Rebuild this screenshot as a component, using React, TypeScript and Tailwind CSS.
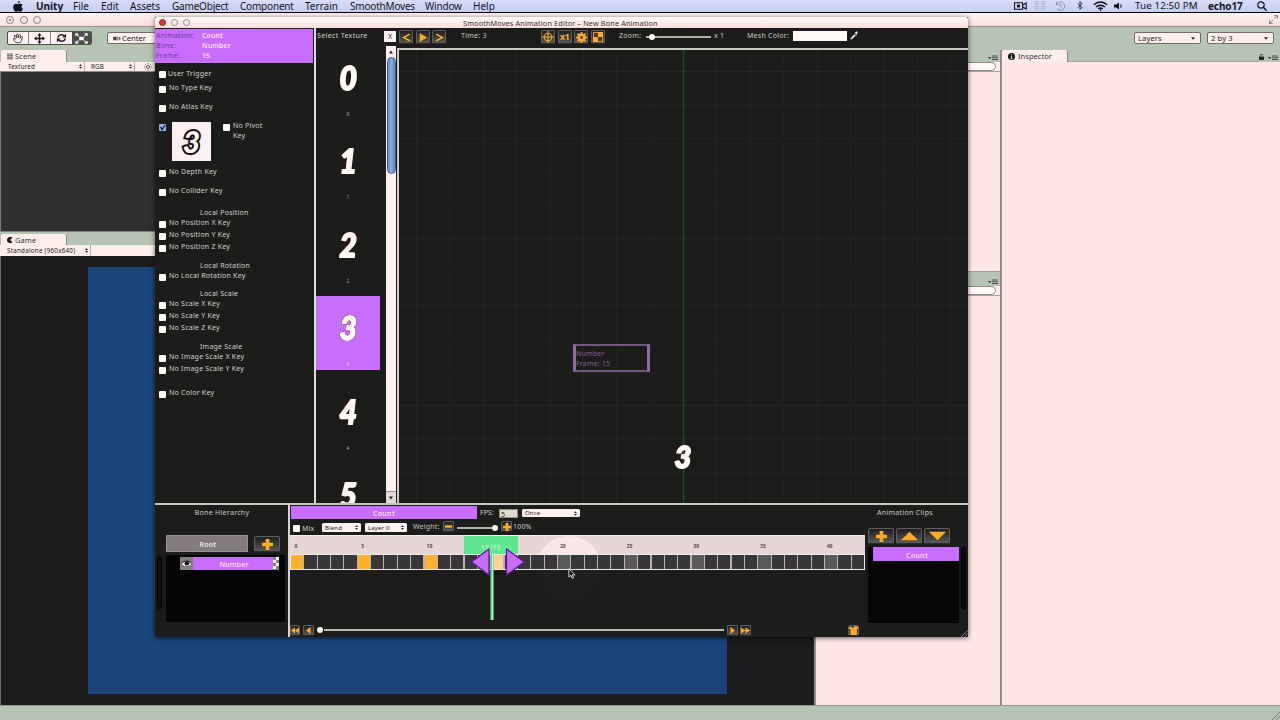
import React from "react";
import clsx from "clsx";

type Kids = { children?: React.ReactNode; className?: string };

function Txt({ children, className }: Kids) {
  return <span className={clsx("block shrink-0 whitespace-pre leading-[10px]", className)}>{children}</span>;
}

function Check({ on }: { on?: boolean }) {
  return (
    <span className={clsx("block h-[7px] w-[7px] shrink-0 rounded-[1px]", on ? "bg-[#8db4ec]" : "bg-[#fffaf4]")}>
      {on && (
        <svg viewBox="0 0 7 7" className="h-[7px] w-[7px]">
          <path d="M1.5 3 L3.2 5.5 L6 1" stroke="#10203c" strokeWidth="1.4" fill="none" />
        </svg>
      )}
    </span>
  );
}

function IconButton({ children, className }: Kids) {
  return (
    <span
      className={clsx(
        "flex shrink-0 items-center justify-center rounded-[2px] border border-[#5f5f5f] border-b-[#2c2c2c] bg-linear-to-b from-[#1f1f1f] to-[#5a5a5a]",
        className,
      )}
    >
      {children}
    </span>
  );
}

function Glyph({ d, className, stroke }: { d: string; className: string; stroke?: number }) {
  return (
    <svg viewBox="0 0 12 12" className={className} preserveAspectRatio="none">
      <path
        d={d}
        fill={stroke ? "none" : "#ffab26"}
        fillRule="evenodd"
        stroke={stroke ? "#ffab26" : "none"}
        strokeWidth={stroke ?? 0}
      />
    </svg>
  );
}

const PLUS = "M4 0H8V4H12V8H8V12H4V8H0V4H4Z";

function UpDown() {
  return (
    <svg viewBox="0 0 4 6" className="h-[5px] w-[3px]">
      <path d="M0 2.4 L2 0 L4 2.4 Z M0 3.6 L2 6 L4 3.6 Z" fill="#222" />
    </svg>
  );
}

function Caret({ className }: { className?: string }) {
  return (
    <svg viewBox="0 0 5 3" className={clsx("h-[3px] w-[4px]", className)}>
      <path d="M0 0H5L2.5 3Z" fill="#222" />
    </svg>
  );
}

function PanelMenu() {
  return (
    <svg viewBox="0 0 10 5" className="h-[5px] w-[10px]">
      <path d="M0 2H3.4L1.7 4.2Z" fill="#333" />
      <path d="M4 1H10M4 2.8H10M4 4.5H10" stroke="#444" strokeWidth="0.9" />
    </svg>
  );
}

function MenuBar() {
  const items = [
    ["Unity", "w-[37px] font-bold"],
    ["File", "w-[28px]"],
    ["Edit", "w-[29px]"],
    ["Assets", "w-[42px]"],
    ["GameObject", "w-[68px] tracking-[-0.2px]"],
    ["Component", "w-[65px] tracking-[-0.2px]"],
    ["Terrain", "w-[45px]"],
    ["SmoothMoves", "w-[75px] tracking-[-0.2px]"],
    ["Window", "w-[48px] tracking-[-0.2px]"],
    ["Help", "w-[28px]"],
  ];
  return (
    <header className="flex h-[13px] shrink-0 items-center border-b border-black bg-linear-to-b from-[#d9ddfa] to-[#c8cdf0] text-[10px] text-[#14141c]">
      <svg viewBox="0 0 20 22" className="ml-[13px] mr-[13px] h-[11px] w-[10px]">
        <path
          d="M14 0 C14.2 2.6 12 5 9.7 5 C9.5 2.6 11.6 .3 14 0Z M10 6.6 C11.3 6.6 12.6 5.3 15 5.3 C16.6 5.3 18.2 6.2 19.2 7.6 C15.8 9.6 16.4 14.3 19.8 15.7 C18.9 18.3 17 21.6 14.6 21.6 C13 21.6 12.4 20.6 10.4 20.6 C8.4 20.6 7.7 21.6 6.1 21.6 C3.4 21.6 .3 16.5 .3 12 C.3 7.8 2.9 5.3 5.8 5.3 C7.7 5.3 9 6.6 10 6.6Z"
          fill="#101018"
        />
      </svg>
      {items.map(([label, cls]) => (
        <Txt key={label} className={cls}>{label}</Txt>
      ))}
      <div className="flex-1" />
      <svg viewBox="0 0 13 8" className="mb-px h-[8px] w-[13px]">
        <path d="M.5 .8H8.6V7.2H.5Z M8.8 3L12.2 1V7L8.8 5" fill="none" stroke="#15151c" strokeWidth="1.1" />
        <path d="M3 2.6H6V5.4H3Z" fill="#15151c" />
      </svg>
      <svg viewBox="0 0 10 9" className="mb-px ml-[8px] h-[9px] w-[10px]">
        <path d="M0 1H4M0 3.3H4M0 5.6H4M0 8H4M6 1H10M6 3.3H10M6 5.6H10M6 8H10" stroke="#a9adc9" strokeWidth="1" />
      </svg>
      <svg viewBox="0 0 12 10" className="mb-px ml-[9px] h-[10px] w-[12px]">
        <path d="M2.5 3.2A4.3 4.3 0 1 1 3 7.8M2.4 .8V3.6H5M6.4 2.6V5.2L8.4 6.2" fill="none" stroke="#8a8ea8" strokeWidth="1" />
      </svg>
      <svg viewBox="0 0 6 10" className="mb-px ml-[11px] h-[9px] w-[6px]">
        <path d="M.6 2.6L5.2 7.2L3 9.4V.6L5.2 2.8L.6 7.4" fill="none" stroke="#20202c" strokeWidth="1" />
      </svg>
      <svg viewBox="0 0 16 11" className="mb-px ml-[10px] h-[10px] w-[15px]">
        <path d="M.8 4.2A10 10 0 0 1 15.2 4.2M3.2 6.6A6.8 6.8 0 0 1 12.8 6.6M5.6 8.8A3.4 3.4 0 0 1 10.4 8.8" fill="none" stroke="#0e0e16" strokeWidth="1.6" />
        <circle cx="8" cy="10" r="1" fill="#0e0e16" />
      </svg>
      <svg viewBox="0 0 9 8" className="mb-px ml-[6px] h-[8px] w-[9px]">
        <path d="M0 2.6H2.2L5 .4V7.6L2.2 5.4H0Z" fill="#101018" />
        <path d="M6.6 2.4A2.4 2.4 0 0 1 6.6 5.6" fill="none" stroke="#101018" />
      </svg>
      <Txt className="ml-[12px] w-[73px] text-[9.8px] tracking-[0.1px]">Tue 12:50 PM</Txt>
      <Txt className="w-[49px] text-[10px] font-bold tracking-[-0.1px]">echo17</Txt>
      <svg viewBox="0 0 10 10" className="mb-px mr-[13px] h-[10px] w-[10px]">
        <circle cx="4" cy="4" r="3.2" fill="none" stroke="#15151c" strokeWidth="1.2" />
        <path d="M6.3 6.3L9.6 9.6" stroke="#15151c" strokeWidth="1.5" />
      </svg>
    </header>
  );
}

function UnityTop() {
  return (
    <>
      <div className="flex h-[14px] shrink-0 items-center gap-[5.5px] border-b border-[#9d9492] bg-linear-to-b from-[#fdf3f1] to-[#f9dfdd] pl-[6px]">
        {[0, 1, 2].map((i) => (
          <span key={i} className="flex h-[8px] w-[8px] items-center justify-center rounded-full border border-[#8f8787] bg-[#f3e8e6]">
            {i === 0 && <span className="h-[2px] w-[2px] rounded-full bg-[#777]" />}
          </span>
        ))}
        <div className="flex-1" />
        <svg viewBox="0 0 10 10" className="mr-[2px] h-[9px] w-[9px]">
          <path d="M5.6 4.4L9.4 .6M6 .6H9.4V4M4.4 5.6L.6 9.4M.6 6V9.4H4" fill="none" stroke="#777" />
        </svg>
      </div>
      <div className="flex h-[23px] shrink-0 items-center bg-[#b8c4b3] pb-px">
        <div className="ml-[7px] flex h-[14px] w-[85px] overflow-hidden rounded-[2px] border border-[#4d504b] bg-[#fdf2f1]">
          <div className="flex w-[21px] items-center justify-center border-r border-[#8b8585]">
            <svg viewBox="0 0 24 24" className="h-[11px] w-[12px]">
              <path d="M7 21C5 18 2.5 15 1.8 12.5C2.5 11 4.5 12 6 14L4 6C4.5 4 6.5 4.5 7 6L9 11L9 3.5C9.5 1.5 11.8 1.8 12 3.5L12.6 10.6L14.6 4C15.6 2.4 17.6 3.2 17.3 5L16.6 11.4L19.6 7.6C21.2 6.8 22.4 8 21.6 9.8C20 13 19.4 18 17 21Z" fill="#fffafa" stroke="#333" strokeWidth="1.8" />
            </svg>
          </div>
          <div className="flex w-[22px] items-center justify-center border-r border-[#8b8585]">
            <svg viewBox="0 0 12 12" className="h-[11px] w-[11px]">
              <path d="M6 1V11M1 6H11" stroke="#151515" strokeWidth="1.5" />
              <path d="M6 0L8.2 2.8H3.8ZM6 12L8.2 9.2H3.8ZM0 6L2.8 3.8V8.2ZM12 6L9.2 3.8V8.2Z" fill="#151515" />
            </svg>
          </div>
          <div className="flex w-[21px] items-center justify-center">
            <svg viewBox="0 0 12 12" className="h-[10px] w-[11px]">
              <path d="M1.5 5.5C2 2 7 .8 9.4 3.6M10.5 6.5C10 10 5 11.2 2.6 8.4" fill="none" stroke="#151515" strokeWidth="1.7" />
              <path d="M11.5 1V5.5H7ZM.5 11V6.5H5Z" fill="#151515" />
            </svg>
          </div>
          <div className="flex flex-1 items-center justify-center bg-[#4a4d49]">
            <svg viewBox="0 0 14 12" className="h-[11px] w-[13px]">
              <path d="M4.5 4H9.5V8H4.5Z" fill="#fff" />
              <path d="M1 1L4 3.6M13 1L10 3.6M1 11L4 8.4M13 11L10 8.4M.8 3.4V.8H3.6M13.2 3.4V.8H10.4M.8 8.6V11.2H3.6M13.2 8.6V11.2H10.4" stroke="#fff" strokeWidth="1.1" fill="none" />
            </svg>
          </div>
        </div>
        <div className="ml-[15px] flex h-[12px] w-[60px] items-center rounded-[2px] border border-[#6a6d68] bg-[#fdf2f1] pl-[5px]">
          <svg viewBox="0 0 9 6" className="h-[5px] w-[8px]">
            <path d="M0 1H4V5H0ZM5 .5H6V5.5H5ZM7 1.5H8.5V4.5H7Z" fill="#444" />
          </svg>
          <Txt className="ml-px text-[7.6px] text-[#181818]">Center</Txt>
        </div>
        <div className="flex-1" />
        {[
          ["Layers", "w-[67px] mr-[6px]"],
          ["2 by 3", "w-[67px] mr-[6px]"],
        ].map(([l, c]) => (
          <div key={l} className={clsx("flex h-[12px] items-center justify-between rounded-[2px] border border-[#6a6d68] bg-[#fdeeec] px-[3px]", c)}>
            <Txt className="text-[7.5px] tracking-[0.15px] text-[#222]">{l}</Txt>
            <Caret className="mr-[2px]" />
          </div>
        ))}
      </div>
    </>
  );
}

function Scene() {
  return (
    <div className="flex w-[814px] shrink-0 flex-col">
      <div className="flex h-[12px] shrink-0 bg-[#b8c4b3]">
        <div className="ml-px flex w-[66px] items-center rounded-t-[2px] border-r border-[#8a8a86] bg-[#fdeeec] pl-[6px]">
          <svg viewBox="0 0 7 8" className="h-[7px] w-[6px]">
            <path d="M1.2 0V8M3.5 0V8M5.8 0V8M0 2.5H7M0 5.5H7" stroke="#444" strokeWidth="0.8" />
          </svg>
          <Txt className="ml-[2px] text-[7.5px] tracking-[0.1px] text-[#333]">Scene</Txt>
        </div>
      </div>
      <div className="flex h-[10px] shrink-0 items-center border-b border-[#8f8a88] bg-[#fdeeec] text-[6.2px] tracking-[0.2px] text-[#1c1c1c]">
        <Txt className="ml-[8px] w-[71px]">Textured</Txt>
        <UpDown />
        <span className="ml-[2px] mr-[3px] h-full w-px bg-[#b7aeac]" />
        <Txt className="ml-[3px] w-[38px]">RGB</Txt>
        <UpDown />
        <span className="ml-[2px] mr-[9px] h-full w-px bg-[#b7aeac]" />
        <svg viewBox="0 0 10 10" className="h-[8px] w-[8px]">
          <circle cx="5" cy="5" r="1.9" fill="none" stroke="#333" />
          <path d="M5 0V1.6M5 8.4V10M0 5H1.6M8.4 5H10M1.4 1.4L2.6 2.6M7.4 7.4L8.6 8.6M8.6 1.4L7.4 2.6M1.4 8.6L2.6 7.4" stroke="#333" strokeWidth="0.9" />
        </svg>
      </div>
      <div className="h-[159px] shrink-0 border-l border-[#77777b] bg-[#303030]" />
      <div className="flex h-[14px] shrink-0 border-t border-[#7d807a] bg-[#b8c4b3]">
        <div className="ml-px mt-[2px] flex w-[66px] items-center rounded-t-[2px] border-r border-[#8a8a86] bg-[#fdeeec] pl-[6px]">
          <svg viewBox="0 0 6 6" className="h-[6px] w-[6px]">
            <path d="M5.4 1A3 3 0 1 0 5.4 5L3 3Z" fill="#151515" />
          </svg>
          <Txt className="ml-[2px] text-[7.5px] tracking-[0.1px] text-[#333]">Game</Txt>
        </div>
      </div>
      <div className="flex h-[11px] shrink-0 items-center bg-[#fdeeec] text-[6.2px] tracking-[0.2px] text-[#1c1c1c]">
        <Txt className="ml-[7px] w-[78px] tracking-[0.28px]">Standalone (960x640)</Txt>
        <UpDown />
        <span className="ml-[2px] h-full w-px bg-[#b7aeac]" />
      </div>
      <div className="flex-1 border-l border-[#66666b] bg-[#1e1b1f] pl-[87px] pt-[11px]">
        <div className="h-[427px] w-[639px] bg-[#1b4479]" />
      </div>
    </div>
  );
}

function SearchStrip() {
  return (
    <>
      <div className="flex h-[12px] shrink-0 items-center justify-end bg-[#b8c4b3] pr-[2px] pt-[3px]">
        <PanelMenu />
      </div>
      <div className="flex h-[10px] shrink-0 items-center justify-end border-b border-[#a79f9d] bg-[#fdeeec] pr-[4px]">
        <div className="h-[9px] w-[80px] rounded-r-full border border-[#8f8a88] bg-[#fffaf9]" />
      </div>
    </>
  );
}

function MiddleColumn() {
  return (
    <div className="flex w-[188px] shrink-0 flex-col border-x-2 border-[#8f8b8d] bg-[#fee7e5]">
      <SearchStrip />
      <div className="h-[200px] shrink-0 border-b border-[#a39c9b]" />
      <div className="h-[2px] shrink-0 bg-[#b8c4b3]" />
      <SearchStrip />
    </div>
  );
}

function Inspector() {
  return (
    <div className="flex flex-1 flex-col bg-[#fee7e5]">
      <div className="flex h-[12px] shrink-0 items-center bg-[#b8c4b3]">
        <div className="flex h-full w-[66px] items-center rounded-t-[2px] border-r border-[#8a8a86] bg-[#fdeeec] pl-[6px]">
          <svg viewBox="0 0 8 8" className="h-[7px] w-[7px]">
            <circle cx="4" cy="4" r="4" fill="#111" />
            <path d="M4 1.2V2.4M4 3.2V6.6M3 3.5H4M2.8 6.4H5.2" stroke="#fff" strokeWidth="0.9" />
          </svg>
          <Txt className="ml-[3px] text-[7.5px] tracking-[0.05px] text-[#333]">Inspector</Txt>
        </div>
        <div className="h-full flex-1 border-b border-[#a3a89c]" />
        <svg viewBox="0 0 6 7" className="mr-[4px] mt-[2px] h-[6px] w-[5px]">
          <path d="M0 3H6V7H0Z" fill="#222" />
          <path d="M1.4 3V1.8A1.6 1.4 0 0 1 4.6 1.6" fill="none" stroke="#222" />
        </svg>
        <div className="mr-[2px] mt-[3px]">
          <PanelMenu />
        </div>
      </div>
    </div>
  );
}

type KeyRow = { label: string; cls: string; heading?: boolean };

const ROWS: KeyRow[] = [
  { label: "No Depth Key", cls: "mt-[6px]" },
  { label: "No Collider Key", cls: "mt-[7px]" },
  { label: "Local Position", cls: "mt-[10px]", heading: true },
  { label: "No Position X Key", cls: "" },
  { label: "No Position Y Key", cls: "" },
  { label: "No Position Z Key", cls: "" },
  { label: "Local Rotation", cls: "mt-[7px]", heading: true },
  { label: "No Local Rotation Key", cls: "" },
  { label: "Local Scale", cls: "mt-[6px]", heading: true },
  { label: "No Scale X Key", cls: "" },
  { label: "No Scale Y Key", cls: "" },
  { label: "No Scale Z Key", cls: "" },
  { label: "Image Scale", cls: "mt-[7px]", heading: true },
  { label: "No Image Scale X Key", cls: "" },
  { label: "No Image Scale Y Key", cls: "" },
  { label: "No Color Key", cls: "mt-[12px]" },
];

function CheckRow({ label, className }: { label: string; className?: string }) {
  return (
    <div className={clsx("flex h-[12px] items-start pl-[4px]", className)}>
      <span className="mt-[3px]">
        <Check />
      </span>
      <Txt className="ml-[3px]">{label}</Txt>
    </div>
  );
}

const DIGIT = "block font-[Lato,sans-serif] font-black italic leading-none text-[#fffaf5]";
const HEAVY = "[-webkit-text-stroke:1.8px_#fffaf5] [filter:drop-shadow(0_0_0.6px_#4a120a)_drop-shadow(0.5px_0.8px_0_#2b0d08)] scale-x-[0.94]";
const OUTLINED = "[paint-order:stroke_fill] [-webkit-text-stroke:4px_#140808]";

function KeyPanel() {
  return (
    <div className="flex w-[159px] shrink-0 flex-col text-[7px] tracking-[0.23px] text-[#d2d2cf]">
      <div className="mr-px mt-px flex h-[34px] flex-col justify-center bg-[#c86eff]">
        {[
          ["Animation:", "Count"],
          ["Bone:", "Number"],
          ["Frame:", "15"],
        ].map(([a, b]) => (
          <div key={a} className="flex pl-[1px]">
            <Txt className="w-[46px] text-[#6d3c93]">{a}</Txt>
            <Txt className="font-semibold tracking-[0.1px] text-[#ffdcff]">{b}</Txt>
          </div>
        ))}
      </div>
      <div className="mt-[6px] flex h-[10px] items-center gap-[2px] pl-[4px]">
        <Check />
        <Txt>User Trigger</Txt>
      </div>
      <CheckRow label="No Type Key" className="mt-[4px]" />
      <CheckRow label="No Atlas Key" className="mt-[7px]" />
      <div className="mt-[8px] flex h-[39px] pl-[4px]">
        <span className="mt-[2px]">
          <Check on />
        </span>
        <div className="ml-[6px] flex h-[39px] w-[39px] items-center justify-center bg-[#fdf0f2]">
          <span className={clsx(DIGIT, OUTLINED, "-translate-y-[1px] text-[30px]")}>3</span>
        </div>
        <span className="ml-[12px] mt-[2px]">
          <Check />
        </span>
        <div className="ml-[3px]">
          <Txt className="mt-[-1px] leading-[9px]">{"No Pivot\nKey"}</Txt>
        </div>
      </div>
      {ROWS.map((r) =>
        r.heading ? (
          <Txt key={r.label} className={clsx("ml-[45px]", r.cls)}>{r.label}</Txt>
        ) : (
          <CheckRow key={r.label} label={r.label} className={r.cls} />
        ),
      )}
    </div>
  );
}

function TexturePanel() {
  return (
    <div className="flex w-[83px] shrink-0 flex-col border-l-2 border-[#dcdcd8]">
      <div className="flex h-[18px] shrink-0 items-start pl-[1px] pt-[3px]">
        <Txt className="w-[67px] text-[7px] tracking-[0.35px] text-[#d2d2cf]">Select Texture</Txt>
        <span className="flex h-[11px] w-[12px] items-center justify-center bg-[#fbf3f3] text-[7px] leading-none text-[#2b2b2b]">X</span>
      </div>
      <div className="flex min-h-0 flex-1">
        <div className="flex w-[70px] flex-col gap-[9.4px] overflow-hidden">
          {[0, 1, 2, 3, 4, 5].map((n) => (
            <div key={n} className={clsx("flex h-[74px] w-[64px] shrink-0 flex-col items-center pt-[16px]", n === 3 && "bg-[#c86eff]")}>
              <span className={clsx(DIGIT, HEAVY, "text-[32px]")}>{n}</span>
              {n < 5 && <Txt className={clsx("mt-[15px] text-[5px]", n === 3 ? "text-[#f3d2ff]" : "text-[#aaa]")}>{n}</Txt>}
            </div>
          ))}
        </div>
        <div className="flex w-[10px] flex-col items-center bg-[#fdf0f1]">
          <div className="flex h-[11px] items-center">
            <svg viewBox="0 0 5 4" className="h-[4px] w-[4px]">
              <path d="M0 4L2.5 0L5 4Z" fill="#3b0d18" />
            </svg>
          </div>
          <div className="h-[117px] w-[9px] rounded-full border border-[#3c5688] bg-linear-to-r from-[#6d90cc] via-[#86aae2] to-[#5f82be]" />
          <div className="flex-1" />
          <div className="flex h-[12px] w-full items-center justify-center border-t border-[#9a9292] bg-[#e3d9d9]">
            <svg viewBox="0 0 5 4" className="h-[4px] w-[4px]">
              <path d="M0 0L2.5 4L5 0Z" fill="#222" />
            </svg>
          </div>
        </div>
      </div>
    </div>
  );
}

const STEP = 33.4;

function Canvas() {
  return (
    <div className="relative min-h-0 flex-1 overflow-hidden border-l-2 border-t-2 border-[#c9c9c6] bg-[#1c1c1a]">
      <svg viewBox="0 0 569 453" className="h-[453px] w-[569px]">
        {Array.from({ length: 17 }, (_, i) => (
          <path key={"v" + i} d={`M${17.4 + i * STEP} 0V453`} stroke="#242624" strokeWidth="1" />
        ))}
        {Array.from({ length: 13 }, (_, i) => (
          <path key={"h" + i} d={`M0 ${21.5 + i * STEP}H569`} stroke="#242624" strokeWidth="1" />
        ))}
        <path d="M284.5 0V453" stroke="#1a4f20" strokeWidth="1.5" />
      </svg>
      <div className="absolute left-[174px] top-[294px] h-[28px] w-[77px] border-x-[3px] border-y-2 border-x-[#8f6ba6] border-y-[#6f5a7d] pt-[3px] text-[7px] tracking-[0.2px] text-[#7d6090]">
        <Txt className="leading-[10px]">Number</Txt>
        <Txt className="leading-[10px]">Frame: 15</Txt>
      </div>
      <span className={clsx(DIGIT, HEAVY, "absolute left-[275px] top-[391px] text-[31px]")}>3</span>
    </div>
  );
}

function Toolbar() {
  return (
    <div className="flex h-[20px] shrink-0 items-start pl-[2px] pt-[2px] text-[7px] tracking-[0.25px] text-[#c9c9c6]">
      <div className="flex w-[62px] gap-[2.5px]">
        <IconButton className="h-[14px] w-[14px]">
          <Glyph className="h-[9px] w-[9px]" stroke={1.9} d="M10.5 1.5L2 6L10.5 10.5" />
        </IconButton>
        <IconButton className="h-[14px] w-[14px]">
          <Glyph className="h-[9px] w-[8px]" d="M1 0L12 6L1 12Z" />
        </IconButton>
        <IconButton className="h-[14px] w-[14px]">
          <Glyph className="h-[9px] w-[9px]" stroke={1.9} d="M1.5 1.5L10 6L1.5 10.5" />
        </IconButton>
      </div>
      <Txt className="mt-px w-[80px]">Time: 3</Txt>
      <div className="flex w-[78px] gap-[2.7px]">
        <IconButton className="h-[14px] w-[14px]">
          <Glyph className="h-[12px] w-[12px]" stroke={1.1} d="M6 0V12M0 6H12M2.2 6A3.8 3.8 0 1 0 9.8 6A3.8 3.8 0 1 0 2.2 6" />
        </IconButton>
        <IconButton className="h-[14px] w-[14px] text-[8.5px] font-bold leading-none tracking-[-0.2px] text-[#ffab26]">x1</IconButton>
        <IconButton className="h-[14px] w-[14px]">
          <Glyph
            className="h-[11px] w-[11px]"
            d="M5 0H7L7.3 1.8L8.6 2.3L10 1.2L11 2.4L10 3.6L10.4 4.8L12 5.2V6.8L10.4 7.2L9.9 8.6L10.9 10L9.8 11L8.4 10L7.3 10.4L7 12H5L4.7 10.4L3.5 9.9L2.2 10.9L1.1 9.8L2 8.4L1.6 7.2L0 6.8V5.2L1.7 4.8L2.1 3.5L1.1 2.2L2.3 1.1L3.6 2.1L4.8 1.7ZM6 4.4A1.6 1.6 0 1 0 6 7.6A1.6 1.6 0 1 0 6 4.4Z"
          />
        </IconButton>
        <IconButton className="h-[14px] w-[14px]">
          <svg viewBox="0 0 12 12" className="h-[10px] w-[10px]">
            <path d="M0 0H12V12H0Z" fill="#ffab26" />
            <path d="M1 1H6V6H1ZM6 6H11V11H6Z" fill="#4c3a1c" />
          </svg>
        </IconButton>
      </div>
      <Txt className="mt-px w-[27px]">Zoom:</Txt>
      <div className="mt-[3px] flex h-[8px] w-[68px] items-center">
        <span className="h-[2px] w-[3px] bg-[#aab5a8]" />
        <span className="h-[6px] w-[6px] rounded-full bg-[#fffaf5]" />
        <span className="h-[2px] w-[56px] bg-[#aab5a8]" />
      </div>
      <Txt className="mt-px w-[33px]">x 1</Txt>
      <Txt className="mt-px w-[46px]">Mesh Color:</Txt>
      <span className="mt-px h-[10px] w-[54px] bg-[#fffaf7]" />
      <svg viewBox="0 0 8 9" className="ml-[3px] mt-px h-[9px] w-[8px]">
        <path d="M.4 8.6L1 6.8L4.6 3.2L5.8 4.4L2.2 8Z M4.6 2L5.4 1.6L6.6 .2L7.9 1.3L6.8 2.8L6.8 4.4Z" fill="#efefec" />
      </svg>
    </div>
  );
}

function BoneHierarchy() {
  return (
    <div className="flex w-[133px] shrink-0 flex-col">
      <Txt className="mt-[3px] w-[134px] text-center text-[7px] tracking-[0.3px] text-[#c9c9c6]">Bone Hierarchy</Txt>
      <div className="mt-[17px] flex h-[18px] pl-[11px]">
        <div className="flex h-[17px] w-[82px] items-center justify-center border border-[#9a9395] bg-[#837c7e]">
          <Txt className="mt-[3px] pl-[2px] text-[7px] font-semibold tracking-[0.2px] text-[#efe8e8]">Root</Txt>
        </div>
        <IconButton className="ml-[6px] mt-[1px] h-[16px] w-[26px]">
          <Glyph className="h-[11px] w-[11px]" d={PLUS} />
        </IconButton>
      </div>
      <div className="mt-[2px] flex pl-[2px]">
        <div className="mt-px h-[53px] w-[5px] rounded-full border border-black bg-[#111]" />
        <div className="ml-[4px] h-[67px] w-[119px] bg-[#050504] pl-[14px] pt-[2px]">
          <div className="flex h-[13px] w-[99px]">
            <div className="flex w-[13px] items-center justify-center bg-[#857e82]">
              <svg viewBox="0 0 12 8" className="h-[7px] w-[11px]">
                <path d="M.5 4.5C3 .5 9 .5 11.5 4.5C9 7.5 3 7.5 .5 4.5Z" fill="#f5f5f5" />
                <circle cx="6.4" cy="3.8" r="2.5" fill="#0c0c0c" />
                <path d="M.5 4C3 .3 9 .3 11.5 4" fill="none" stroke="#0c0c0c" strokeWidth="1.1" />
              </svg>
            </div>
            <div className="flex flex-1 items-center justify-center bg-[#c86eff]">
              <Txt className="mt-[3px] pl-[2px] text-[7px] font-semibold tracking-[0.15px] text-[#ffd6ff]">Number</Txt>
            </div>
            <svg viewBox="0 0 6 13" className="h-[13px] w-[6px]">
              <path d="M0 0H6V13H0Z" fill="#8a8580" />
              <path d="M3 0H6V3H3ZM0 3H3V6H0ZM3 6H6V9H3ZM0 9H3V12H0Z" fill="#f3efe6" />
            </svg>
          </div>
        </div>
      </div>
    </div>
  );
}

function Select({ label, className }: { label: string; className: string }) {
  return (
    <div className={clsx("flex shrink-0 items-center justify-between rounded-[1.5px] bg-[#fdf0f0] px-[3px] text-[6px] tracking-[0.15px] text-[#222]", className)}>
      <Txt>{label}</Txt>
      <UpDown />
    </div>
  );
}

function Timeline() {
  const frames = Array.from({ length: 43 }, (_, i) => i);
  return (
    <div className="relative flex w-[580px] shrink-0 flex-col border-l-2 border-[#d5d5d1] text-[7px] tracking-[0.2px] text-[#c9c9c6]">
      <div className="flex h-[15px] shrink-0 items-start">
        <div className="ml-px mt-px flex h-[13px] w-[186px] items-center justify-center bg-[#c86eff]">
          <Txt className="mt-[2px] font-semibold tracking-[0.3px] text-[#ffd6ff]">Count</Txt>
        </div>
        <Txt className="ml-[3px] mt-[3px] w-[19px] tracking-[0px]">FPS:</Txt>
        <div className="mt-[4px] h-[9px] w-[19px] border border-[#8d8d85] bg-[#dfdccf] pl-px text-[#222]">
          <Txt className="leading-[7px]">5</Txt>
        </div>
        <Select label="Once" className="ml-[4px] mt-[4px] h-[8px] w-[58px]" />
      </div>
      <div className="flex h-[15px] shrink-0 items-start pl-[3px]">
        <span className="mt-[5px]"><Check /></span>
        <Txt className="ml-[2px] mt-[4px] w-[20px]">Mix</Txt>
        <Select label="Blend" className="mt-[3px] h-[9px] w-[39px]" />
        <Select label="Layer 0" className="ml-[4px] mt-[3px] h-[9px] w-[42px]" />
        <Txt className="ml-[6px] mt-[2px] w-[30px]">Weight:</Txt>
        <IconButton className="mt-px h-[11px] w-[11px]">
          <Glyph className="h-[7px] w-[7px]" d="M0 4H12V8H0Z" />
        </IconButton>
        <span className="ml-[3px] mt-[7px] h-[2px] w-[35px] bg-[#aab5a8]" />
        <span className="mt-[5px] h-[6px] w-[6px] rounded-full bg-[#fffaf5]" />
        <IconButton className="ml-[3px] mt-px h-[11px] w-[11px]">
          <Glyph className="h-[8px] w-[8px]" d={PLUS} />
        </IconButton>
        <Txt className="ml-[1px] mt-[2px]">100%</Txt>
      </div>
      <div className="relative h-[19px] w-[575px] shrink-0 overflow-hidden border-t border-[#f7eeee] bg-[#e7d6d6]">
        <span className="absolute left-[246px] top-0 h-[66px] w-[66px] rounded-full bg-[#fbe7e7]" />
        <span className="absolute left-[174px] top-0 flex h-[18px] w-[54px] items-end justify-center bg-[#62e690]">
          <Txt className="text-[7px] font-semibold leading-[13px] text-[#b2f7ca]">15/15</Txt>
        </span>
        {[0, 5, 10, 20, 25, 30, 35, 40].map((n) => (
          <span
            key={n}
            className="absolute top-[5px] w-[14px] text-center text-[5px] font-semibold leading-[10px] tracking-[0px] text-[#3a3030]"
            style={{ left: -1 + n * 13.34 }}
          >
            {n}
          </span>
        ))}
      </div>
      <div className="grid h-[16px] w-[575px] shrink-0 grid-cols-[repeat(43,1fr)] gap-[1.2px] border border-[#f1e9e9] bg-[#b9b2b4]">
        {frames.map((f) => (
          <span
            key={f}
            className={clsx(
              f === 0 || f === 5 || f === 10 ? "bg-[#ffb02c]" : f === 15 ? "bg-[#ffd293]" : f % 5 === 0 ? "bg-[#5b585a]" : "bg-[#39363a]",
            )}
          />
        ))}
      </div>
      <span className="absolute left-[246px] top-[66px] h-[33px] w-[66px] rounded-b-full bg-white/[0.012]" />
      <svg viewBox="0 0 56 76" className="absolute left-[180px] top-[42px] h-[76px] w-[56px]">
        <path d="M22 6V73" stroke="#5fe08c" strokeWidth="3.2" />
        <path d="M22.6 6V73" stroke="#c2f5d2" strokeWidth="1" />
        <path d="M1.5 15L19 2V28Z M54 15L36.500 2V28Z" fill="#cb6cfb" stroke="#5a1d99" strokeWidth="1.2" />
      </svg>
      <svg viewBox="0 0 9 13" className="absolute left-[278px] top-[62px] h-[13px] w-[8px]">
        <path d="M1 1V10.500L3.300 8.500L4.800 12L6.300 11.300L4.800 8H8Z" fill="#111" stroke="#fff" strokeWidth="0.9" />
      </svg>
      <div className="flex-1" />
      <div className="mb-px flex h-[12px] shrink-0 items-center">
        <IconButton className="h-[11px] w-[10px]">
          <Glyph className="h-[7px] w-[9px]" d="M6 1V11L0 6ZM12 1V11L6 6Z" />
        </IconButton>
        <IconButton className="ml-[3px] h-[11px] w-[11px]">
          <Glyph className="h-[7px] w-[5px]" d="M11 0V12L0 6Z" />
        </IconButton>
        <span className="ml-[3px] h-[6px] w-[6px] rounded-full bg-[#fffaf5]" />
        <span className="ml-px h-[2px] w-[400px] bg-[#b4bdb1]" />
        <IconButton className="ml-[3px] h-[11px] w-[11px]">
          <Glyph className="h-[7px] w-[5px]" d="M1 0V12L12 6Z" />
        </IconButton>
        <IconButton className="ml-[2px] h-[11px] w-[11px]">
          <Glyph className="h-[7px] w-[9px]" d="M0 1V11L6 6ZM6 1V11L12 6Z" />
        </IconButton>
        <IconButton className="ml-[97px] h-[11px] w-[11px]">
          <Glyph className="h-[9px] w-[9px]" d="M0 1H4L5 3L7 0L12 1V4H10.500V12H2V4H0Z" />
        </IconButton>
      </div>
    </div>
  );
}

function Clips() {
  return (
    <div className="flex flex-1 flex-col">
      <Txt className="ml-[9px] mt-[3px] text-[7px] tracking-[0.3px] text-[#c9c9c6]">Animation Clips</Txt>
      <div className="mt-[10px] flex gap-[2px]">
        {[PLUS, "M0 11L6 1L12 11Z", "M0 1L6 11L12 1Z"].map((d, i) => (
          <IconButton key={i} className="h-[16px] w-[26px]">
            <Glyph className={i ? "h-[10px] w-[17px]" : "h-[11px] w-[11px]"} d={d} />
          </IconButton>
        ))}
      </div>
      <div className="mt-[3px] flex">
        <div className="h-[76px] w-[91px] bg-[#060605] pl-[5px]">
          <div className="flex h-[14px] items-center justify-center bg-[#c86eff]">
            <Txt className="mt-[3px] pl-[2px] text-[7px] font-semibold tracking-[0.3px] text-[#ffd6ff]">Count</Txt>
          </div>
        </div>
        <div className="ml-[2px] h-[62px] w-[5px] shrink-0 rounded-full border border-black bg-[#0c0c0e]" />
      </div>
      <div className="flex flex-1 items-end justify-end">
        <svg viewBox="0 0 7 7" className="h-[7px] w-[7px]">
          <path d="M0 7L7 0M3.500 7L7 3.500" stroke="#999" strokeWidth="0.8" />
        </svg>
      </div>
    </div>
  );
}

function EditorWindow() {
  return (
    <section className="absolute left-[155px] top-[17px] flex h-[620px] w-[813px] flex-col bg-[#1c1c1a] shadow-[0_1px_5px_rgba(0,0,0,0.6)]">
      <div className="flex h-[11px] shrink-0 items-center gap-[5px] rounded-t-[2px] bg-linear-to-b from-[#fffafa] to-[#fbdedd] pl-[4px]">
        <span className="h-[7px] w-[7px] rounded-full border border-[#8e2222] bg-[#e8323e]" />
        <span className="h-[7px] w-[7px] rounded-full border border-[#8f8787] bg-[#f7ecea]" />
        <span className="h-[7px] w-[7px] rounded-full border border-[#8f8787] bg-[#f7ecea]" />
        <Txt className="ml-[268px] text-[7.3px] tracking-[0.13px] text-[#333]">SmoothMoves Animation Editor – New Bone Animation</Txt>
      </div>
      <div className="flex h-[475px] shrink-0">
        <KeyPanel />
        <TexturePanel />
        <div className="flex min-w-0 flex-1 flex-col">
          <Toolbar />
          <Canvas />
        </div>
      </div>
      <div className="h-[2px] shrink-0 bg-[#c3c7bf]" />
      <div className="flex min-h-0 flex-1">
        <BoneHierarchy />
        <Timeline />
        <Clips />
      </div>
    </section>
  );
}

export default function App() {
  return (
    <main className="relative flex h-[720px] w-[1280px] flex-col overflow-hidden bg-[#b8c4b3] font-['Noto_Sans','Open_Sans',sans-serif]">
      <MenuBar />
      <UnityTop />
      <div className="flex h-[656px] shrink-0 border-b border-[#8f958b]">
        <Scene />
        <MiddleColumn />
        <Inspector />
      </div>
      <footer className="flex flex-1 items-end justify-end">
        <svg viewBox="0 0 8 8" className="h-[8px] w-[8px]">
          <path d="M0 8L8 0M4 8L8 4" stroke="#777" strokeWidth="0.9" />
        </svg>
      </footer>
      <EditorWindow />
    </main>
  );
}
